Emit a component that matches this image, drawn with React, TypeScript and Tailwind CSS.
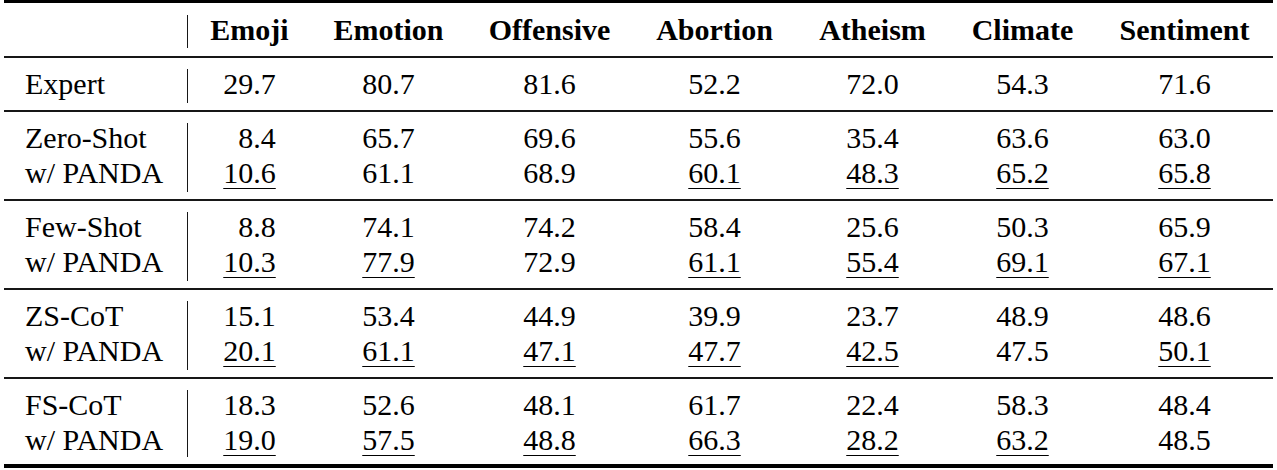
const columns = ['Emoji', 'Emotion', 'Offensive', 'Abortion', 'Atheism', 'Climate', 'Sentiment']

// fixed column widths so the cells line up with the typeset table
const widths = ['w-[123px]', 'w-[155px]', 'w-[167px]', 'w-[163px]', 'w-[153px]', 'w-[147px]', 'w-[177px]']

type Cell = { v: string; u?: boolean }

const groups: { label: string; cells: Cell[] }[][] = [
  [
    {
      label: 'Expert',
      cells: [{ v: '29.7' }, { v: '80.7' }, { v: '81.6' }, { v: '52.2' }, { v: '72.0' }, { v: '54.3' }, { v: '71.6' }],
    },
  ],
  [
    {
      label: 'Zero-Shot',
      cells: [{ v: '8.4' }, { v: '65.7' }, { v: '69.6' }, { v: '55.6' }, { v: '35.4' }, { v: '63.6' }, { v: '63.0' }],
    },
    {
      label: 'w/ PANDA',
      cells: [
        { v: '10.6', u: true },
        { v: '61.1' },
        { v: '68.9' },
        { v: '60.1', u: true },
        { v: '48.3', u: true },
        { v: '65.2', u: true },
        { v: '65.8', u: true },
      ],
    },
  ],
  [
    {
      label: 'Few-Shot',
      cells: [{ v: '8.8' }, { v: '74.1' }, { v: '74.2' }, { v: '58.4' }, { v: '25.6' }, { v: '50.3' }, { v: '65.9' }],
    },
    {
      label: 'w/ PANDA',
      cells: [
        { v: '10.3', u: true },
        { v: '77.9', u: true },
        { v: '72.9' },
        { v: '61.1', u: true },
        { v: '55.4', u: true },
        { v: '69.1', u: true },
        { v: '67.1', u: true },
      ],
    },
  ],
  [
    {
      label: 'ZS-CoT',
      cells: [{ v: '15.1' }, { v: '53.4' }, { v: '44.9' }, { v: '39.9' }, { v: '23.7' }, { v: '48.9' }, { v: '48.6' }],
    },
    {
      label: 'w/ PANDA',
      cells: [
        { v: '20.1', u: true },
        { v: '61.1', u: true },
        { v: '47.1', u: true },
        { v: '47.7', u: true },
        { v: '42.5', u: true },
        { v: '47.5' },
        { v: '50.1', u: true },
      ],
    },
  ],
  [
    {
      label: 'FS-CoT',
      cells: [{ v: '18.3' }, { v: '52.6' }, { v: '48.1' }, { v: '61.7' }, { v: '22.4' }, { v: '58.3' }, { v: '48.4' }],
    },
    {
      label: 'w/ PANDA',
      cells: [
        { v: '19.0', u: true },
        { v: '57.5', u: true },
        { v: '48.8', u: true },
        { v: '66.3', u: true },
        { v: '28.2', u: true },
        { v: '63.2', u: true },
        { v: '48.5' },
      ],
    },
  ],
]

function Num({ cell }: { cell: Cell }) {
  // single-digit values get a phantom leading zero, like \phantom{0} in the paper
  const pad = cell.v.length < 4
  return (
    <span>
      {pad && <span className="invisible">0</span>}
      <span className={cell.u ? 'underline decoration-1 underline-offset-[5px]' : ''}>{cell.v}</span>
    </span>
  )
}

function Bar({ header }: { header?: boolean }) {
  return <div className={`w-px bg-neutral-900 ${header ? 'mt-[12px] mb-[8px]' : 'mt-[11px] mb-[7px]'}`} />
}

export default function App() {
  return (
    <div
      className="w-[1277px] h-[470px] bg-white text-black text-[30px] leading-[35px]"
      style={{ fontFamily: '"Liberation Serif", "Times New Roman", serif' }}
    >
      <div className="ml-[4px] w-[1269px] flex flex-col">
        {/* top rule */}
        <div className="h-[3px] bg-black" />

        {/* header */}
        <div className="flex h-[53px]">
          <div className="w-[183px]" />
          <Bar header />
          {columns.map((c, i) => (
            <div key={c} className={`${widths[i]} pt-[9px] text-center font-bold`}>
              {c}
            </div>
          ))}
        </div>

        {groups.map((rows, gi) => {
          const last = gi === groups.length - 1
          return (
            <div key={gi}>
              <div className="h-[2px] bg-neutral-900" />
              <div className="flex">
                <div className={`w-[183px] pl-[21px] pt-[8px] ${last ? 'pb-[7px]' : 'pb-[9px]'}`}>
                  {rows.map((r) => (
                    <div key={r.label}>{r.label}</div>
                  ))}
                </div>
                <Bar />
                {columns.map((c, ci) => (
                  <div key={c} className={`${widths[ci]} pt-[8px] text-center ${last ? 'pb-[7px]' : 'pb-[9px]'}`}>
                    {rows.map((r, ri) => (
                      <div key={ri}>
                        <Num cell={r.cells[ci]} />
                      </div>
                    ))}
                  </div>
                ))}
              </div>
            </div>
          )
        })}

        {/* bottom rule */}
        <div className="h-[4px] bg-black" />
      </div>
    </div>
  )
}
